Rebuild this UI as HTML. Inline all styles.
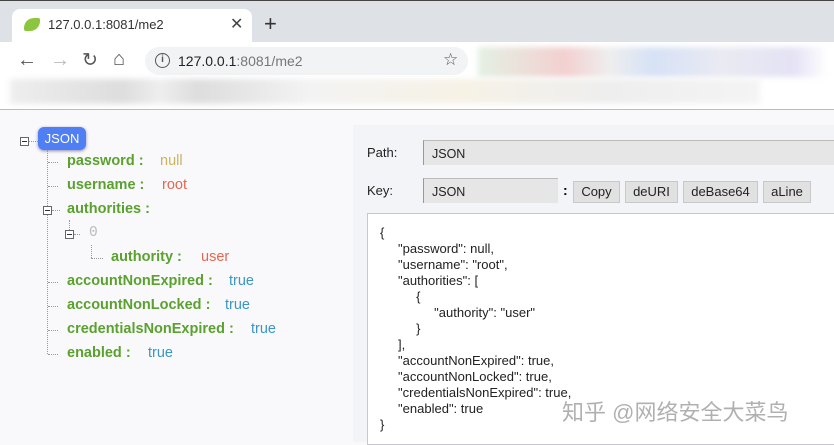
<!DOCTYPE html>
<html><head><meta charset="utf-8"><style>
*{margin:0;padding:0;box-sizing:border-box}
body{width:834px;height:442px;overflow:hidden;position:relative;font-family:"Liberation Sans",sans-serif;background:#f9f9fc}
.a{position:absolute}
.k{position:absolute;font-weight:bold;color:#5ba12e;font-size:14.5px}
.v{position:absolute;font-size:14.5px}
.dot{position:absolute;border-color:#999;border-style:dotted;border-width:0}
.mb{position:absolute;width:9px;height:9px;border:1px solid #666;background:#fff}
.mb:after{content:"";position:absolute;left:1px;top:3px;width:5px;height:1px;background:#333}
.btn{position:absolute;top:181px;height:22px;background:#e1e1e1;border:1px solid #c8c8c8;font-size:13px;text-align:center;line-height:20px;color:#222}
.j{position:absolute;font-size:13px;color:#222;line-height:16px;white-space:pre}
</style></head><body>
<div class="a" style="left:0;top:0;width:834px;height:42px;background:#dee1e6;border-top:1px solid #444"></div>
<div class="a" style="left:12px;top:9px;width:240px;height:34px;background:#fff;border-radius:8px 8px 0 0"></div>
<div class="a" style="left:24px;top:18px;width:16px;height:13px;background:#8cc63f;border-radius:10px 2px 10px 2px"></div>
<div class="a" style="left:48px;top:17px;font-size:13px;color:#333">127.0.0.1:8081/me2</div>
<div class="a" style="left:230px;top:14px;font-size:16px;color:#444">✕</div>
<div class="a" style="left:264px;top:11px;font-size:22px;color:#333">+</div>
<div class="a" style="left:0;top:42px;width:834px;height:68px;background:#fff;border-bottom:1px solid #bbb"></div>
<div class="a" style="left:17px;top:49px;font-size:20px;color:#555">←</div>
<div class="a" style="left:50px;top:49px;font-size:20px;color:#bbb">→</div>
<div class="a" style="left:82px;top:49px;font-size:19px;color:#555">↻</div>
<div class="a" style="left:113px;top:48px;font-size:20px;color:#555">⌂</div>
<div class="a" style="left:145px;top:47px;width:323px;height:28px;background:#f1f3f4;border-radius:14px"></div>
<div class="a" style="left:155px;top:53px;width:15px;height:15px;border:1.5px solid #555;border-radius:50%;font-size:10px;text-align:center;line-height:12px;font-weight:bold;color:#555">i</div>
<div class="a" style="left:178px;top:53px;font-size:14px;color:#222">127.0.0.1<span style="color:#777">:8081/me2</span></div>
<div class="a" style="left:443px;top:50px;font-size:17px;color:#555">☆</div>
<div class="a" style="left:478px;top:47px;width:350px;height:30px;background:linear-gradient(90deg,#e4f0e4,#f3d0d0 25%,#eee,#d6e2f6 50%,#eaeaf2 70%,#e4e2f4 90%,#fff);filter:blur(3px)"></div>
<div class="a" style="left:10px;top:79px;width:750px;height:25px;background:linear-gradient(90deg,#eee,#ddd 15%,#eee 20%,#ddd 25%,#f3f3f3 40%,#f6f2e6 60%,#eee 80%,#f4f4f4);filter:blur(3px)"></div>

<div class="mb" style="left:20px;top:137px"></div>
<div class="dot" style="left:29px;top:141px;width:9px;border-top-width:1px"></div>
<div class="a" style="left:38px;top:127px;width:48px;height:23px;background:#4f7ef5;border-radius:6px;color:#fff;font-size:13px;text-align:center;line-height:23px;box-shadow:0 1px 3px #88a">JSON</div>
<div class="dot" style="left:47px;top:150px;height:204px;border-left-width:1px"></div>
<div class="dot" style="left:48px;top:162px;width:10px;border-top-width:1px"></div>
<div class="dot" style="left:48px;top:186px;width:10px;border-top-width:1px"></div>
<div class="dot" style="left:52px;top:210px;width:8px;border-top-width:1px"></div>
<div class="mb" style="left:43px;top:206px"></div>
<div class="dot" style="left:69px;top:220px;height:14px;border-left-width:1px"></div>
<div class="mb" style="left:65px;top:230px"></div>
<div class="dot" style="left:74px;top:234px;width:6px;border-top-width:1px"></div>
<div class="dot" style="left:91px;top:245px;height:13px;border-left-width:1px"></div>
<div class="dot" style="left:91px;top:258px;width:12px;border-top-width:1px"></div>
<div class="dot" style="left:48px;top:282px;width:10px;border-top-width:1px"></div>
<div class="dot" style="left:48px;top:306px;width:10px;border-top-width:1px"></div>
<div class="dot" style="left:48px;top:330px;width:10px;border-top-width:1px"></div>
<div class="dot" style="left:48px;top:354px;width:10px;border-top-width:1px"></div>
<div class="k" style="left:67px;top:153px">password :</div><div class="v" style="left:160px;top:153px;color:#c9b35c">null</div>
<div class="k" style="left:67px;top:177px">username :</div><div class="v" style="left:162px;top:177px;color:#e2674f">root</div>
<div class="k" style="left:67px;top:201px">authorities :</div>
<div class="v" style="left:89px;top:225px;color:#bbb;font-family:'Liberation Mono',monospace">0</div>
<div class="k" style="left:111px;top:249px">authority :</div><div class="v" style="left:201px;top:249px;color:#e2674f">user</div>
<div class="k" style="left:67px;top:273px">accountNonExpired :</div><div class="v" style="left:229px;top:273px;color:#3a96c4">true</div>
<div class="k" style="left:67px;top:297px">accountNonLocked :</div><div class="v" style="left:225px;top:297px;color:#3a96c4">true</div>
<div class="k" style="left:67px;top:321px">credentialsNonExpired :</div><div class="v" style="left:251px;top:321px;color:#3a96c4">true</div>
<div class="k" style="left:67px;top:345px">enabled :</div><div class="v" style="left:148px;top:345px;color:#3a96c4">true</div>

<div class="a" style="left:353px;top:125px;width:481px;height:317px;background:#f3f4f7"></div>
<div class="a" style="left:367px;top:145px;font-size:13px;color:#222">Path:</div>
<div class="a" style="left:423px;top:140px;width:411px;height:25px;background:#e6e6e6;border-left:1px solid #999;border-top:1px solid #bbb;font-size:12.5px;padding:6px 8px;color:#222">JSON</div>
<div class="a" style="left:367px;top:183px;font-size:13px;color:#222">Key:</div>
<div class="a" style="left:423px;top:178px;width:135px;height:25px;background:#e6e6e6;border-left:1px solid #999;border-top:1px solid #bbb;font-size:12.5px;padding:6px 8px;color:#222">JSON</div>
<div class="a" style="left:563px;top:182px;font-size:14px;font-weight:bold">:</div>
<div class="btn" style="left:573px;width:47px">Copy</div>
<div class="btn" style="left:625px;width:53px">deURI</div>
<div class="btn" style="left:683px;width:75px">deBase64</div>
<div class="btn" style="left:763px;width:48px">aLine</div>
<div class="a" style="left:367px;top:213px;width:470px;height:232px;background:#fff;border:1px solid #c8c8cc"></div>
<div class="j" style="left:380px;top:225px">{
     "password": null,
     "username": "root",
     "authorities": [
          {
               "authority": "user"
          }
     ],
     "accountNonExpired": true,
     "accountNonLocked": true,
     "credentialsNonExpired": true,
     "enabled": true
}</div>
<div class="a" style="left:562px;top:395px;font-size:22px;color:rgba(150,150,150,.75);font-family:'Liberation Sans','Noto Sans CJK SC',sans-serif;white-space:nowrap">知乎 @网络安全大菜鸟</div>
</body></html>
